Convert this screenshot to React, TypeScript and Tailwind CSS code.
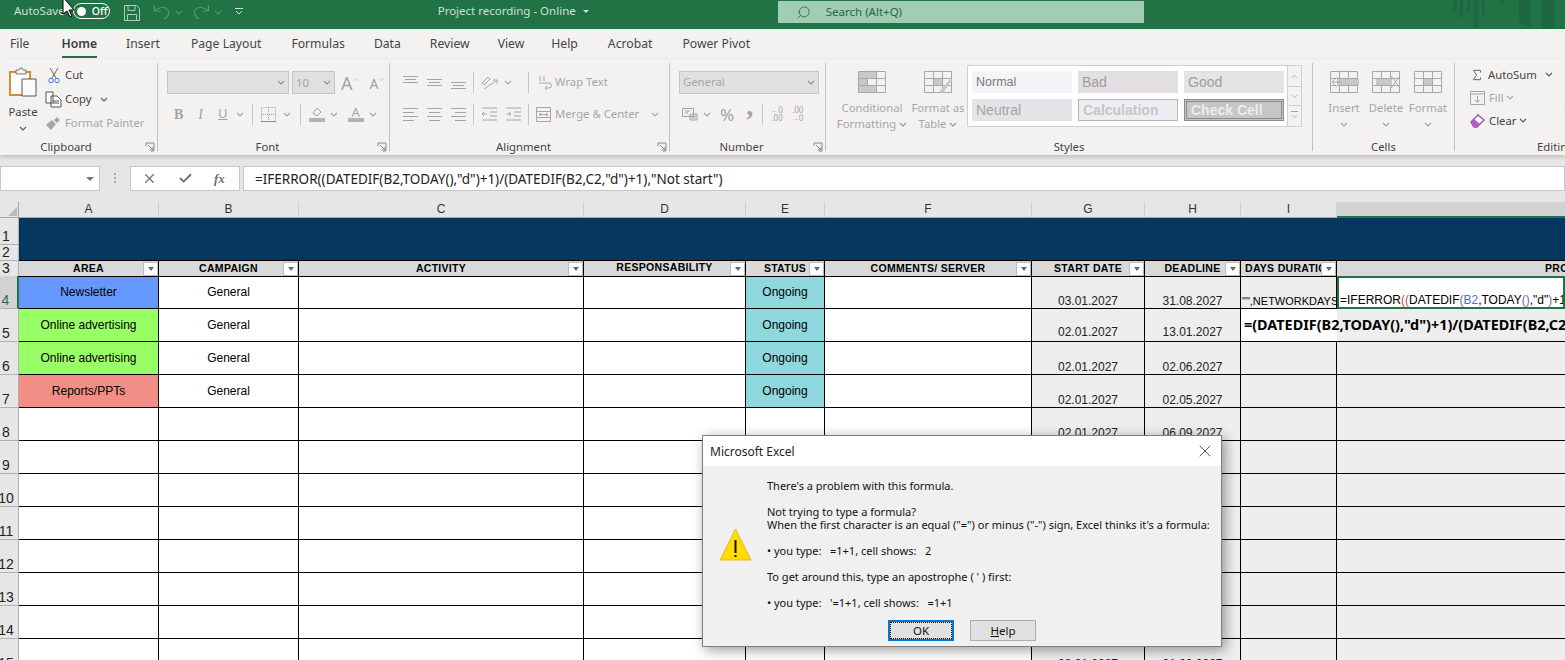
import { Check, ChevronDown, ChevronUp, Search, Sigma, X } from 'lucide-react'
import type { ReactNode } from 'react'

const gridCols =
  'grid grid-cols-[19px_140px_140px_285px_162px_79px_207px_113px_96px_96px_228px]'

/* small helpers */
function Chev({ className = 'text-[#8f8f8f]' }: { className?: string }) {
  return (
    <svg width="8" height="5" viewBox="0 0 8 5" className={className}>
      <path d="M1 1l3 3 3-3" fill="none" stroke="currentColor" strokeWidth="1.1" />
    </svg>
  )
}

function Launcher() {
  return (
    <svg width="10" height="10" viewBox="0 0 10 10" className="text-[#8a8a8a]">
      <path d="M1 4V1h8v8H6M3 3l5 5M8 5v3H5" fill="none" stroke="currentColor" strokeWidth="1" />
    </svg>
  )
}

function Lines({ rows, align }: { rows: number[]; align: 'l' | 'c' | 'r' }) {
  return (
    <svg width="15" height="15" viewBox="0 0 15 15" className="text-[#a3a3a3]">
      {rows.map((y, i) => {
        const w = i % 2 === 0 ? 15 : 11
        const x = align === 'l' ? 0 : align === 'r' ? 15 - w : (15 - w) / 2
        return <rect key={y} x={x} y={y} width={w} height="1" fill="currentColor" />
      })}
    </svg>
  )
}

function Grid3({ children }: { children?: ReactNode }) {
  return (
    <svg width="30" height="24" viewBox="0 0 30 24" className="text-[#a8a8a8]">
      <path
        d="M1.5 1.5h27v21h-27zM1.5 8.5h27M1.5 15.5h27M10.5 1.5v21M19.5 1.5v21"
        fill="none"
        stroke="currentColor"
      />
      {children}
    </svg>
  )
}

function Sep({ h = 'h-[21px]' }: { h?: string }) {
  return <div className={'w-px bg-[#c8c6c4] ' + h} />
}

function Group({
  width,
  label,
  launcher,
  labelClass = '',
  children,
}: {
  width: string
  label: string
  launcher?: boolean
  labelClass?: string
  children: ReactNode
}) {
  return (
    <div className={'flex h-[88px] shrink-0 flex-col border-r border-[#c3c1bf] ' + width}>
      <div className="h-[76px]">{children}</div>
      <div className="flex h-[12px] items-center pt-[4px] text-[11.3px] leading-none text-[#444]">
        <span className={'flex-1 text-center ' + labelClass}>{label}</span>
        {launcher && <span className="flex w-[12px] pr-[2px]"><Launcher /></span>}
      </div>
    </div>
  )
}

function BigButton({ label, chevron, icon, width }: { label: ReactNode; chevron?: boolean; icon: ReactNode; width: string }) {
  return (
    <div className={'flex flex-col items-center pt-[7px] text-[11.3px] leading-[16px] text-[#a6a6a6] ' + width}>
      <div className="h-[30px]">{icon}</div>
      <div className="whitespace-nowrap text-center">{label}</div>
      {chevron && <div className="mt-[6px]"><Chev className="text-[#a0a0a0]" /></div>}
    </div>
  )
}

function TitleBar() {
  return (
    <div className="flex h-[29px] items-start bg-[#217346] text-[#c9e2d3]">
      <span className="ml-[14px] mt-[3px] text-[11.5px] leading-[16px]">AutoSave</span>
      <div className="ml-[8px] mt-[3px] flex h-[16px] w-[37px] items-center rounded-full border border-white pl-[3px] text-white">
        <span className="h-[9px] w-[9px] rounded-full bg-white" />
        <span className="ml-[6px] text-[10.5px] font-medium leading-none">Off</span>
      </div>
      <svg width="18" height="18" viewBox="0 0 18 18" className="ml-[13px] mt-[4px] text-[#a9d0b9]">
        <path d="M1.5 1.5h12l3 3v12h-15zM5 1.5v5h7v-5M4.5 16.5v-6h9v6" fill="none" stroke="currentColor" />
      </svg>
      <svg width="18" height="16" viewBox="0 0 18 16" className="ml-[12px] mt-[4px] text-[#4f9a70]">
        <path d="M1.5 1v6h6M2 7c3-4 10-5 13-1 2 3 0 7-4 9" fill="none" stroke="currentColor" strokeWidth="1.2" />
      </svg>
      <Chev className="ml-[4px] mt-[10px] text-[#4f9a70]" />
      <svg width="18" height="16" viewBox="0 0 18 16" className="ml-[9px] mt-[4px] text-[#4f9a70]">
        <path d="M16.5 1v6h-6M16 7c-3-4-10-5-13-1-2 3 0 7 4 9" fill="none" stroke="currentColor" strokeWidth="1.2" />
      </svg>
      <Chev className="ml-[4px] mt-[10px] text-[#4f9a70]" />
      <svg width="8" height="8" viewBox="0 0 8 8" className="ml-[13px] mt-[8px] text-[#c9e2d3]">
        <path d="M0 .5h8M1 3l3 3 3-3" fill="none" stroke="currentColor" />
      </svg>
      <span className="ml-[195px] mt-[3px] whitespace-nowrap text-[11.5px] leading-[16px]">Project recording - Online</span>
      <span className="ml-[7px] mt-[10px] h-0 w-0 border-x-[3px] border-t-[3px] border-x-transparent border-t-[#c9e2d3]" />
      <div className="ml-[189px] mt-px flex h-[22px] w-[366px] items-center bg-[#a0cdb3] text-[#1f6a40]">
        <Search size={15} strokeWidth={1.3} className="ml-[18px] -scale-x-100" />
        <span className="ml-[15px] text-[11.5px]">Search (Alt+Q)</span>
      </div>
      <svg width="112" height="29" viewBox="0 0 112 29" className="ml-auto text-[#1d6840]">
        <path
          d="M0 0h4v11H0zM7 0h3v18H7zM14 0h3v11h-3zM21 0h4v27h-4zM29 0h3v15h-3zM46 0h4v5zM66 0h11v27l-11-5zM89 0h13v29H89z"
          fill="currentColor"
        />
      </svg>
    </div>
  )
}

function Tabs() {
  const tabs = [
    ['File', 'ml-[10px]'],
    ['Home', 'ml-[32px]'],
    ['Insert', 'ml-[29px]'],
    ['Page Layout', 'ml-[31px]'],
    ['Formulas', 'ml-[30px]'],
    ['Data', 'ml-[29px]'],
    ['Review', 'ml-[29px]'],
    ['View', 'ml-[28px]'],
    ['Help', 'ml-[27px]'],
    ['Acrobat', 'ml-[30px]'],
    ['Power Pivot', 'ml-[30px]'],
  ]
  return (
    <div className="flex h-[30px] bg-[#f3f2f1] text-[12.2px] leading-[30px] text-[#444]">
      {tabs.map(([t, m]) => (
        <div key={t} className={'relative whitespace-nowrap ' + m + (t === 'Home' ? ' font-semibold text-[#3c3c3c]' : '')}>
          {t}
          {t === 'Home' && <span className="absolute inset-x-0 bottom-[1px] h-[2px] bg-[#217346]" />}
        </div>
      ))}
    </div>
  )
}

function Clipboard() {
  return (
    <Group width="w-[158px]" label="Clipboard" launcher labelClass="pr-[13px]">
      <div className="flex">
        <div className="ml-[6px] flex w-[34px] flex-col items-center pt-[4px] text-[11.3px] leading-[16px] text-[#444]">
          <svg width="30" height="32" viewBox="0 0 30 32">
            <path d="M2 5h20v23H2z" fill="#fff" stroke="#d98c2c" strokeWidth="2" />
            <path d="M8 5V3h3l1-2h2l1 2h3v4H8z" fill="#f3f2f1" stroke="#777" />
            <path d="M14 12h14v17H14z" fill="#fbfbfb" stroke="#555" />
          </svg>
          <span className="mt-[5px]">Paste</span>
          <Chev className="mt-[6px] text-[#555]" />
        </div>
        <div className="ml-[5px] flex flex-col text-[11.3px] leading-[24px] text-[#444]">
          <div className="flex h-[24px] items-center">
            <svg width="12" height="17" viewBox="0 0 12 17" className="ml-[3px]">
              <path d="M2 1l6 10M10 1L4 11" stroke="#666" fill="none" />
              <circle cx="3" cy="13.5" r="2.2" fill="none" stroke="#2b7cd3" />
              <circle cx="9" cy="13.5" r="2.2" fill="none" stroke="#2b7cd3" />
            </svg>
            <span className="ml-[5px]">Cut</span>
          </div>
          <div className="flex h-[24px] items-center">
            <svg width="17" height="17" viewBox="0 0 17 17">
              <path d="M1 1h7v11H1zM6 5h6l4 4v7H6z" fill="#fff" stroke="#555" />
              <path d="M8 10h6M8 12h6" stroke="#555" />
            </svg>
            <span className="ml-[3px]">Copy</span>
            <Chev className="ml-[9px] text-[#555]" />
          </div>
          <div className="flex h-[24px] items-center text-[#a6a6a6]">
            <svg width="17" height="15" viewBox="0 0 17 15" className="text-[#a6a6a6]">
              <path d="M1 9l6-5 4 4-5 6zM9 4l3-3 3 3-3 3z" fill="currentColor" />
            </svg>
            <span className="ml-[3px] whitespace-nowrap">Format Painter</span>
          </div>
        </div>
      </div>
    </Group>
  )
}

function FontGroup() {
  return (
    <Group width="w-[232px]" label="Font" launcher>
      <div className="flex flex-col pl-[9px] pt-[8px]">
        <div className="flex h-[23px] items-center">
          <div className="flex h-[23px] w-[122px] items-center justify-end border border-[#c6c6c6] bg-[#e0e0e0] pr-[3px]">
            <Chev />
          </div>
          <div className="ml-[3px] flex h-[23px] w-[43px] items-center justify-between border border-[#c6c6c6] bg-[#e0e0e0] px-[3px] text-[11.5px] text-[#a6a6a6]">
            10
            <Chev />
          </div>
          <div className="ml-[6px] flex items-start text-[#a3a3a3]">
            <span className="text-[18px] leading-none">A</span>
            <ChevronUp size={7} className="mt-[2px]" />
            <span className="ml-[10px] mt-[3px] text-[14px] leading-none">A</span>
            <ChevronDown size={7} className="mt-[2px]" />
          </div>
        </div>
        <div className="mt-[8px] flex h-[24px] items-center text-[#a3a3a3]">
          <span className="ml-[7px] font-['Liberation_Serif',serif] text-[14px] font-bold">B</span>
          <span className="ml-[15px] font-['Liberation_Serif',serif] text-[14px] italic">I</span>
          <span className="ml-[15px] text-[13px] underline">U</span>
          <Chev className="ml-[8px]" />
          <div className="ml-[8px]"><Sep /></div>
          <svg width="15" height="15" viewBox="0 0 15 15" className="ml-[8px]">
            <path d="M.5.5h14v14H.5z" fill="none" stroke="#a3a3a3" strokeDasharray="1 1" />
            <path d="M0 14.5h15" stroke="#8c8c8c" />
            <path d="M7.5 0v15M0 7.5h15" stroke="#a3a3a3" strokeDasharray="1 1" />
          </svg>
          <Chev className="ml-[7px]" />
          <div className="ml-[9px]"><Sep /></div>
          <svg width="16" height="16" viewBox="0 0 16 16" className="ml-[8px]">
            <path d="M4 7l4-5 4 4-4 4z" fill="none" stroke="#a3a3a3" />
            <rect y="12" width="16" height="4" fill="#b4b2b0" />
          </svg>
          <Chev className="ml-[5px]" />
          <div className="ml-[10px] flex flex-col items-center">
            <span className="text-[13px] leading-[12px]">A</span>
            <span className="h-[4px] w-[16px] bg-[#b4b2b0]" />
          </div>
          <Chev className="ml-[5px]" />
        </div>
      </div>
    </Group>
  )
}

function Alignment() {
  return (
    <Group width="w-[280px]" label="Alignment" launcher>
      <div className="flex flex-col pl-[13px] pt-[8px] text-[#a6a6a6]">
        <div className="flex h-[23px] items-center">
          <div className="flex gap-[9px]">
            <Lines rows={[1, 4, 7]} align="c" />
            <Lines rows={[4, 7, 10]} align="c" />
            <Lines rows={[7, 10, 13]} align="c" />
          </div>
          <div className="ml-[7px]"><Sep /></div>
          <svg width="17" height="15" viewBox="0 0 17 15" className="ml-[7px] text-[#a6a6a6]">
            <path d="M1 8l6-6 2 2-6 6zM3 14L16 5M16 5h-4M16 5v4" fill="none" stroke="currentColor" />
          </svg>
          <Chev className="ml-[6px]" />
          <div className="ml-[16px]"><Sep /></div>
          <div className="ml-[9px] flex items-center text-[11.3px] text-[#a6a6a6]">
            <svg width="15" height="15" viewBox="0 0 15 15" className="mr-[2px] text-[#a6a6a6]">
              <path d="M1 8h10a2.500 2.500 0 010 5H7M7 13l2-2M7 13l2 2" fill="none" stroke="currentColor" />
              <path d="M2 1v5M6 1v5" stroke="currentColor" />
            </svg>
            <span className="whitespace-nowrap">Wrap Text</span>
          </div>
        </div>
        <div className="mt-[8px] flex h-[24px] items-center">
          <div className="flex gap-[9px]">
            <Lines rows={[1, 5, 9, 13]} align="l" />
            <Lines rows={[1, 5, 9, 13]} align="c" />
            <Lines rows={[1, 5, 9, 13]} align="r" />
          </div>
          <div className="ml-[7px]"><Sep /></div>
          <svg width="15" height="15" viewBox="0 0 15 15" className="ml-[8px] text-[#a6a6a6]">
            <path d="M0 1h15M8 5h7M8 9h7M0 13h15M5 7H0M2 5L0 7l2 2" fill="none" stroke="currentColor" />
          </svg>
          <svg width="15" height="15" viewBox="0 0 15 15" className="ml-[9px] text-[#a6a6a6]">
            <path d="M0 1h15M8 5h7M8 9h7M0 13h15M0 7h5M3 5l2 2-2 2" fill="none" stroke="currentColor" />
          </svg>
          <div className="ml-[7px]"><Sep /></div>
          <div className="ml-[7px] flex items-center text-[11.3px] text-[#a6a6a6]">
            <svg width="15" height="15" viewBox="0 0 15 15" className="mr-[4px] text-[#a6a6a6]">
              <path d="M.5.5h14v14H.5zM0 4.500h15M0 10.500h15M3 7.500h9M5 6L3 7.500 5 9M10 6l2 1.500L10 9" fill="none" stroke="currentColor" />
            </svg>
            <span className="whitespace-nowrap">Merge &amp; Center</span>
            <Chev className="ml-[12px]" />
          </div>
        </div>
      </div>
    </Group>
  )
}

function NumberGroup() {
  return (
    <Group width="w-[156px]" label="Number" launcher>
      <div className="flex flex-col pl-[9px] pt-[8px]">
        <div className="flex h-[23px] w-[140px] items-center justify-between border border-[#c6c6c6] bg-[#e0e0e0] px-[3px] text-[11.3px] text-[#a6a6a6]">
          General
          <Chev />
        </div>
        <div className="mt-[8px] flex h-[24px] items-center text-[#a3a3a3]">
          <svg width="16" height="14" viewBox="0 0 16 14" className="ml-[3px] text-[#a3a3a3]">
            <path d="M.5 1.500h11v8H.5zM8 7h7v6H8z" fill="#f3f2f1" stroke="currentColor" />
            <path d="M3 4h5M3 6h3M9 9h5M9 11h5" stroke="currentColor" />
          </svg>
          <Chev className="ml-[5px]" />
          <span className="ml-[9px] text-[17px] leading-none">%</span>
          <span className="-mt-[16px] ml-[12px] font-['Liberation_Serif',serif] text-[28px] font-bold leading-none">,</span>
          <div className="ml-[9px]"><Sep /></div>
          <div className="ml-[7px] text-right text-[8px] leading-[8px]">←0<br />.00</div>
          <div className="ml-[8px] text-right text-[8px] leading-[8px]">.00<br />→0</div>
        </div>
      </div>
    </Group>
  )
}

function StyleCell({ className, children }: { className: string; children: string }) {
  return (
    <div className={"flex h-[22px] w-[100px] items-center overflow-hidden whitespace-nowrap px-[4px] font-['Liberation_Sans',sans-serif] " + className}>
      {children}
    </div>
  )
}

function Styles() {
  return (
    <Group width="w-[487px]" label="Styles">
      <div className="flex pl-[10px]">
        <BigButton
          width="w-[72px]"
          icon={
            <Grid3>
              <path d="M2 2h17v6H2zM2 9h8v6H2zM2 16h17v6H2z" fill="#c8c8c8" />
            </Grid3>
          }
          label={<>Conditional<br /><span className="inline-flex items-center gap-[3px]">Formatting <Chev /></span></>}
        />
        <BigButton
          width="w-[54px] ml-[3px]"
          icon={
            <Grid3>
              <path d="M11 9h8v6h-8zM16 22l12-14 1 2-9 13z" fill="#c8c8c8" />
            </Grid3>
          }
          label={<>Format as<br /><span className="inline-flex items-center gap-[3px]">Table <Chev /></span></>}
        />
        <div className="ml-[2px] mt-[2px] flex h-[62px] w-[321px] flex-col gap-[6px] border border-[#d0d0d0] bg-white pl-[4px] pt-[5px]">
          <div className="flex gap-[6px]">
            <StyleCell className="bg-[#f6f3f8] text-[12.5px] text-[#7a7a7a]">Normal</StyleCell>
            <StyleCell className="bg-[#e3dfe2] text-[14px] text-[#9e9e9e]">Bad</StyleCell>
            <StyleCell className="bg-[#e4e3e5] text-[14px] text-[#9e9e9e]">Good</StyleCell>
          </div>
          <div className="flex gap-[6px]">
            <StyleCell className="bg-[#e6e3e8] text-[14px] text-[#a3a3a3]">Neutral</StyleCell>
            <StyleCell className="border border-[#b5b5b5] bg-[#f0ecf3] text-[14px] font-bold text-[#c6c6c6]">Calculation</StyleCell>
            <StyleCell className="border-[3px] border-double border-[#8a8a8a] bg-[#c6c6c6] text-[14px] font-bold text-[#ececec]">Check Cell</StyleCell>
          </div>
        </div>
        <div className="mt-[2px] flex h-[62px] w-[14px] flex-col border border-l-0 border-[#d0d0d0] text-[#a0a0a0]">
          <div className="flex h-[21px] items-center justify-center border-b border-[#d0d0d0]"><ChevronUp size={9} /></div>
          <div className="flex h-[19px] items-center justify-center border-b border-[#d0d0d0]"><ChevronDown size={9} /></div>
          <div className="flex flex-1 flex-col items-center justify-center">
            <span className="h-px w-[7px] bg-[#a0a0a0]" />
            <ChevronDown size={9} />
          </div>
        </div>
      </div>
    </Group>
  )
}

function Cells() {
  return (
    <Group width="w-[142px]" label="Cells">
      <div className="flex pl-[10px]">
        <BigButton
          width="w-[42px]"
          chevron
          label="Insert"
          icon={
            <Grid3>
              <path d="M6 9h24v6H6z" fill="#c8c8c8" />
              <path d="M8 7l-5 5 5 5M3 12h10" fill="#f3f2f1" stroke="#a8a8a8" />
            </Grid3>
          }
        />
        <BigButton
          width="w-[42px]"
          chevron
          label="Delete"
          icon={
            <Grid3>
              <path d="M5 9h16v6H5z" fill="#c8c8c8" />
              <path d="M20 6l9 12M29 6l-9 12" stroke="#a8a8a8" />
            </Grid3>
          }
        />
        <BigButton
          width="w-[42px]"
          chevron
          label="Format"
          icon={
            <Grid3>
              <path d="M11 9h8v6h-8z" fill="#c8c8c8" />
            </Grid3>
          }
        />
      </div>
    </Group>
  )
}

function Editing() {
  return (
    <div className="flex h-[88px] flex-1 flex-col">
      <div className="flex h-[76px] pl-[15px] text-[11.3px] leading-[23px] text-[#444]">
        <div className="flex w-[94px] shrink-0 flex-col">
          <div className="flex h-[23px] items-center">
            <Sigma size={14} strokeWidth={1.4} />
            <span className="ml-[4px]">AutoSum</span>
            <Chev className="ml-[8px] text-[#555]" />
          </div>
          <div className="flex h-[23px] items-center text-[#a6a6a6]">
            <svg width="15" height="14" viewBox="0 0 15 14" className="text-[#a6a6a6]">
              <path d="M.5.500h14v13H.5zM0 3h15M7.500 5v6M5 9l2.500 2.500L10 9" fill="none" stroke="currentColor" />
            </svg>
            <span className="ml-[4px]">Fill</span>
            <Chev className="ml-[2px]" />
          </div>
          <div className="flex h-[23px] items-center">
            <svg width="15" height="14" viewBox="0 0 15 14">
              <path d="M1 8l7-7 6 5-7 7H4z" fill="#fff" stroke="#9b4fb0" strokeWidth="1.4" />
              <path d="M1 8l3-3 6 5-3 3H4z" fill="#b45cc7" />
            </svg>
            <span className="ml-[4px]">Clear</span>
            <Chev className="ml-[3px] text-[#555]" />
          </div>
        </div>
        <div className="whitespace-nowrap pt-[37px] leading-[16px] text-[#a6a6a6]">Sort &amp;<br />Filter</div>
      </div>
      <div className="h-[12px] whitespace-nowrap pl-[82px] text-[11.3px] leading-[16px] text-[#444]">Editing</div>
    </div>
  )
}

function Ribbon() {
  return (
    <div className="relative flex h-[96px] bg-[#f3f2f1] pt-[4px] shadow-[0_2px_4px_rgba(0,0,0,0.18)]">
      <Clipboard />
      <FontGroup />
      <Alignment />
      <NumberGroup />
      <Styles />
      <Cells />
      <Editing />
    </div>
  )
}

function FormulaBar() {
  return (
    <div className="flex h-[47px] items-start bg-[#e6e6e6] pb-[10px] pt-[11px]">
      <div className="flex h-[25px] w-[100px] items-center justify-end border border-[#c6c6c6] bg-white pr-[5px]">
        <span className="h-0 w-0 border-x-[4px] border-t-[4px] border-x-transparent border-t-[#777]" />
      </div>
      <div className="ml-[14px] flex w-[2px] flex-col gap-[2px] pt-[7px]">
        <span className="h-[2px] w-[2px] bg-[#aaa]" />
        <span className="h-[2px] w-[2px] bg-[#aaa]" />
        <span className="h-[2px] w-[2px] bg-[#aaa]" />
      </div>
      <div className="ml-[14px] flex h-[25px] w-[110px] items-center border border-[#c6c6c6] bg-white text-[#707070]">
        <X size={15} strokeWidth={2} className="ml-[11px]" />
        <Check size={15} strokeWidth={3} className="ml-[21px]" />
        <span className="ml-[21px] font-['Liberation_Serif',serif] text-[13px] font-semibold italic">fx</span>
      </div>
      <div className="ml-[3px] flex h-[25px] flex-1 items-center whitespace-nowrap border border-[#c6c6c6] bg-white pl-[11px] pt-px text-[13.5px] text-[#222]">
        =IFERROR((DATEDIF(B2,TODAY(),"d")+1)/(DATEDIF(B2,C2,"d")+1),"Not start")
      </div>
    </div>
  )
}

function ColumnHeaders() {
  const cols = ['A', 'B', 'C', 'D', 'E', 'F', 'G', 'H', 'I']
  return (
    <div className={gridCols + " h-[16px] bg-[#e6e6e6] font-['Liberation_Sans',sans-serif] text-[12px] leading-[15px] text-[#333]"}>
      <div className="flex items-end justify-end border-b border-r border-[#a6a6a6] pb-px pr-px">
        <span className="h-0 w-0 border-b-[9px] border-l-[9px] border-b-[#b9b9b9] border-l-transparent" />
      </div>
      {cols.map((c) => (
        <div key={c} className="border-b border-r border-[#a6a6a6] border-r-[#cfcfcf] text-center">{c}</div>
      ))}
      <div className="border-b-2 border-[#217346] bg-[#d2d2d2]" />
    </div>
  )
}

function RowNum({ n, active }: { n: number; active?: boolean }) {
  return (
    <div
      className={
        'flex items-end justify-center border-b border-r border-[#b0b0b0] pr-[6px] text-[14px] font-normal leading-[15px] tracking-normal ' +
        (active ? 'border-r-2 border-r-[#217346] bg-[#d2d2d2] text-[#217346]' : 'bg-[#e6e6e6] text-[#222]')
      }
    >
      {n}
    </div>
  )
}

function Head({ label, className = '' }: { label: string; className?: string }) {
  return (
    <div className={'relative overflow-hidden whitespace-nowrap border-b border-r border-black bg-[#d9d9d9] text-center ' + className}>
      {label}
      <span className="absolute bottom-0 right-0 flex h-[14px] w-[15px] items-center justify-center border border-[#bdbdbd] bg-white">
        <span className="h-0 w-0 border-x-[3.5px] border-t-[4px] border-x-transparent border-t-[#666]" />
      </span>
    </div>
  )
}

const rows = [
  { n: 4, area: 'Newsletter', bg: 'bg-[#6699ff]', status: true, start: '03.01.2027', end: '31.08.2027' },
  { n: 5, area: 'Online advertising', bg: 'bg-[#99ff66]', status: true, start: '02.01.2027', end: '13.01.2027' },
  { n: 6, area: 'Online advertising', bg: 'bg-[#99ff66]', status: true, start: '02.01.2027', end: '02.06.2027' },
  { n: 7, area: 'Reports/PPTs', bg: 'bg-[#f28e86]', status: true, start: '02.01.2027', end: '02.05.2027' },
  { n: 8, area: '', bg: 'bg-white', status: false, start: '02.01.2027', end: '06.09.2027' },
  { n: 9, area: '', bg: 'bg-white', status: false, start: '02.01.2027', end: '06.09.2027' },
  { n: 10, area: '', bg: 'bg-white', status: false, start: '02.01.2027', end: '02.03.2027' },
  { n: 11, area: '', bg: 'bg-white', status: false, start: '02.01.2027', end: '02.03.2027' },
  { n: 12, area: '', bg: 'bg-white', status: false, start: '02.01.2027', end: '02.03.2027' },
  { n: 13, area: '', bg: 'bg-white', status: false, start: '02.01.2027', end: '02.03.2027' },
  { n: 14, area: '', bg: 'bg-white', status: false, start: '02.01.2027', end: '02.03.2027' },
  { n: 15, area: '', bg: 'bg-white', status: false, start: '20.01.2027', end: '01.02.2027' },
]

const cell = 'border-b border-r border-black'
const center = 'flex items-center justify-center '
const grey = 'flex items-end justify-center bg-[#eeeeee] leading-[14px] text-[#222] '

function SelectedFormula() {
  return (
    <>
      =IFERROR<span className="text-[#c0504d]">(</span>
      <span className="text-[#c0504d]">(</span>DATEDIF<span className="text-[#8064a2]">(</span>
      <span className="text-[#4f6fb8]">B2</span>,TODAY<span className="text-[#8064a2]">()</span>,"d"<span className="text-[#8064a2]">)</span>+1)/(DATEDIF(B2,C2,"d")+1),"Not start")
    </>
  )
}

function Sheet() {
  return (
    <div className="font-['Liberation_Sans',sans-serif] text-[12px]">
      <ColumnHeaders />
      <div className={gridCols + ' h-[27px]'}>
        <RowNum n={1} />
        <div className="col-span-10 bg-[#06375f]" />
      </div>
      <div className={gridCols + ' h-[16px]'}>
        <RowNum n={2} />
        <div className="col-span-10 border-b border-black bg-[#06375f]" />
      </div>
      <div className={gridCols + ' h-[15px] text-[10.5px] font-bold leading-[14px] tracking-[0.3px] text-black'}>
        <RowNum n={3} />
        <Head label="AREA" />
        <Head label="CAMPAIGN" />
        <Head label="ACTIVITY" />
        <Head label="RESPONSABILITY" className="leading-[12px]" />
        <Head label="STATUS" />
        <Head label="COMMENTS/ SERVER" />
        <Head label="START DATE" />
        <Head label="DEADLINE" />
        <Head label="DAYS DURATION" className="pl-[4px] text-left" />
        <div className="whitespace-nowrap border-b border-black bg-[#d9d9d9] pl-[208px]">PROGRESS</div>
      </div>
      {rows.map((r) => (
        <div key={r.n} className={gridCols + ' h-[33px] text-black'}>
          <RowNum n={r.n} active={r.n === 4} />
          <div className={center + cell + ' ' + r.bg}>{r.area}</div>
          <div className={center + cell + ' bg-white'}>{r.status ? 'General' : ''}</div>
          <div className={cell + ' bg-white'} />
          <div className={cell + ' bg-white'} />
          <div className={center + cell + (r.status ? ' bg-[#8fd8de]' : ' bg-white')}>{r.status ? 'Ongoing' : ''}</div>
          <div className={cell + ' bg-white'} />
          <div className={grey + cell + (r.n === 5 ? ' pb-[2px]' : '')}>{r.start}</div>
          <div className={grey + cell + (r.n === 5 ? ' pb-[2px]' : '')}>{r.end}</div>
          {r.n === 4 ? (
            <div className={'flex items-end overflow-hidden whitespace-nowrap bg-[#eeeeee] pl-px text-[11px] leading-[14px] ' + cell}>"",NETWORKDAYS</div>
          ) : r.n === 5 ? (
            <div className="relative z-10 flex items-center whitespace-nowrap border-b border-black bg-white pl-[3px] font-['Noto_Sans',sans-serif] text-[14.4px] font-bold">
              =(DATEDIF(B2,TODAY(),"d")+1)/(DATEDIF(B2,C2,"d")+1)
            </div>
          ) : (
            <div className={cell + ' bg-[#eeeeee]'} />
          )}
          {r.n === 4 ? (
            <div className="flex items-end overflow-hidden whitespace-nowrap border-2 border-[#217346] bg-white pl-px leading-[14px]">
              <span><SelectedFormula /></span>
            </div>
          ) : (
            <div className="border-b border-black bg-[#eeeeee]" />
          )}
        </div>
      ))}
    </div>
  )
}

function Dialog() {
  return (
    <div className="absolute left-[702px] top-[435px] z-20 flex h-[212px] w-[520px] flex-col border border-[#7e7e7e] bg-[#f0f0f0] font-['Noto_Sans',sans-serif] text-[11px] leading-[13px] text-[#111] shadow-[3px_3px_12px_rgba(0,0,0,0.4)]">
      <div className="flex h-[30px] shrink-0 items-center justify-between bg-white pl-[7px] pr-[6px] text-[12px] text-[#222]">
        Microsoft Excel
        <X size={20} strokeWidth={0.9} />
      </div>
      <div className="flex flex-1 pl-[16px]">
        <svg width="33" height="33" viewBox="0 0 33 33" className="mt-[62px] shrink-0">
          <path d="M16.500 1L32 32H1z" fill="#ffdd00" stroke="#f0b429" />
          <rect x="15.500" y="12" width="2" height="13" fill="#111" />
          <rect x="15.500" y="27" width="2" height="2" fill="#111" />
        </svg>
        <div className="ml-[15px] whitespace-nowrap pt-[13px]">
          <p>There's a problem with this formula.</p>
          <p className="mt-[13px]">Not trying to type a formula?</p>
          <p>When the first character is an equal ("=") or minus ("-") sign, Excel thinks it's a formula:</p>
          <p className="mt-[13px]">• you type: &nbsp; =1+1, cell shows: &nbsp; 2</p>
          <p className="mt-[13px]">To get around this, type an apostrophe ( ' ) first:</p>
          <p className="mt-[13px]">• you type: &nbsp; '=1+1, cell shows: &nbsp; =1+1</p>
        </div>
      </div>
      <div className="flex h-[26px] shrink-0 items-start pl-[185px] text-[11.5px]">
        <div className="flex h-[21px] w-[66px] items-center justify-center border-2 border-[#0078d7] bg-[#e1e1e1] outline-1 -outline-offset-3 outline-dotted outline-black">OK</div>
        <div className="ml-[16px] flex h-[21px] w-[66px] items-center justify-center border border-[#adadad] bg-[#e1e1e1]"><span className="underline">H</span>elp</div>
      </div>
    </div>
  )
}

export default function App() {
  return (
    <div className="relative h-[660px] w-[1565px] overflow-hidden bg-[#e6e6e6] font-['Noto_Sans',sans-serif]">
      <TitleBar />
      <Tabs />
      <Ribbon />
      <FormulaBar />
      <Sheet />
      <Dialog />
      {/* mouse pointer */}
      <svg width="18" height="18" viewBox="0 0 18 18" className="absolute left-[62px] top-0 z-30">
        <path d="M1 -3v17l4-3 3 6 2-1-3-6h5z" fill="#fff" stroke="#000" />
      </svg>
    </div>
  )
}
